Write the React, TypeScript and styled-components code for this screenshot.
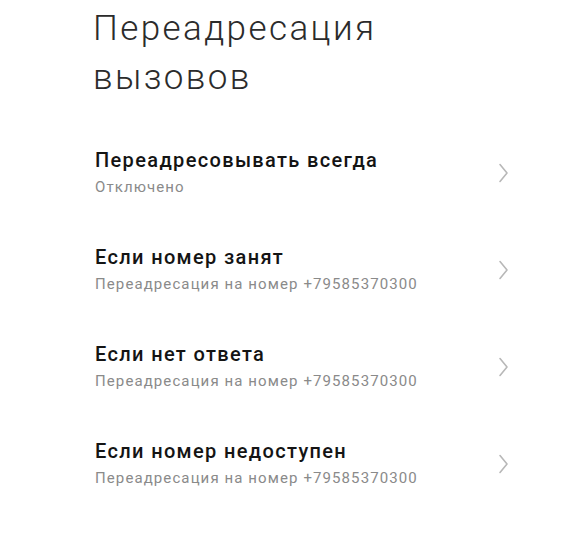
import styled, { createGlobalStyle } from 'styled-components';

const GlobalStyle = createGlobalStyle`
  body {
    margin: 0;
    background: #ffffff;
    font-family: Roboto, "Noto Sans", sans-serif;
  }
`;

type Rule = {
  title: string;
  status: string;
};

const rules: Rule[] = [
  { title: 'Переадресовывать всегда', status: 'Отключено' },
  { title: 'Если номер занят', status: 'Переадресация на номер +79585370300' },
  { title: 'Если нет ответа', status: 'Переадресация на номер +79585370300' },
  { title: 'Если номер недоступен', status: 'Переадресация на номер +79585370300' },
];

const Chevron = () => (
  <svg width="12" height="20" viewBox="0 0 12 20" fill="none">
    <path d="M3 1.5L10 10L3 18.5" stroke="#b8b8b8" strokeWidth="1.6" strokeLinecap="round" strokeLinejoin="round" />
  </svg>
);

const App = () => {
  return (
    <>
      <GlobalStyle />
      <S.Page>
        <S.Heading>Переадресация вызовов</S.Heading>
        <S.List>
          {rules.map((rule) => (
            <S.Row key={rule.title}>
              <S.Texts>
                <S.Title>{rule.title}</S.Title>
                <S.Status>{rule.status}</S.Status>
              </S.Texts>
              <Chevron />
            </S.Row>
          ))}
        </S.List>
      </S.Page>
    </>
  );
};

const S = {
  Page: styled.div`
    width: 579px;
    height: 538px;
    box-sizing: border-box;
    padding: 4px 70px 0 95px;
    overflow: hidden;
  `,

  Heading: styled.h1`
    margin: 0 0 0 -2px;
    width: 320px;
    font-size: 35px;
    font-weight: 300;
    line-height: 49px;
    letter-spacing: 2.4px;
    color: #2b2b2b;
  `,

  List: styled.div`
    display: flex;
    flex-flow: column;
    margin-top: 22px;
  `,

  Row: styled.div`
    display: flex;
    justify-content: space-between;
    align-items: center;
    height: 97px;
  `,

  Texts: styled.div`
    display: flex;
    flex-flow: column;
    gap: 5px;
  `,

  Title: styled.div`
    font-size: 20px;
    font-weight: 500;
    line-height: 24px;
    letter-spacing: 1.35px;
    color: #141414;
  `,

  Status: styled.div`
    font-size: 15px;
    line-height: 20px;
    letter-spacing: 1.1px;
    color: #8a8a8a;
  `,
};

export default App;
